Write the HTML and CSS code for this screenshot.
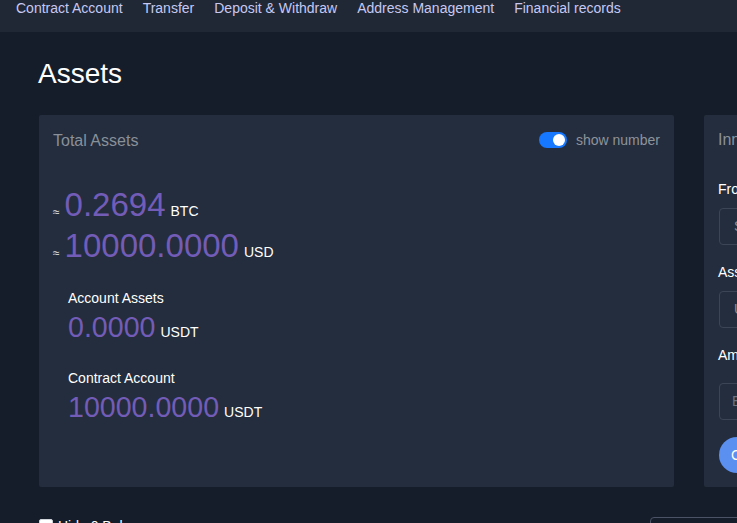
FILE: index.html
```html
<!DOCTYPE html>
<html>
<head>
<meta charset="utf-8">
<link rel="stylesheet" href="styles.css">
</head>
<body>
<nav class="nav">
  <a class="nav-item">Contract Account</a>
  <a class="nav-item">Transfer</a>
  <a class="nav-item">Deposit &amp; Withdraw</a>
  <a class="nav-item">Address Management</a>
  <a class="nav-item">Financial records</a>
</nav>
<main class="main">
  <h1 class="title">Assets</h1>
  <div class="cards">
    <section class="card card-total">
      <div class="card-head">
        <span class="card-title">Total Assets</span>
        <label class="switch-wrap">
          <span class="switch"><span class="knob"></span></span>
          <span class="switch-text">show number</span>
        </label>
      </div>
      <div class="totals">
        <div class="total-line"><span class="approx">≈</span><span class="big">0.2694</span><span class="unit">BTC</span></div>
        <div class="total-line"><span class="approx">≈</span><span class="big">10000.0000</span><span class="unit">USD</span></div>
      </div>
      <div class="sub">
        <div class="sub-label">Account Assets</div>
        <div class="sub-value"><span class="mid">0.0000</span><span class="unit">USDT</span></div>
      </div>
      <div class="sub sub-second">
        <div class="sub-label">Contract Account</div>
        <div class="sub-value"><span class="mid">10000.0000</span><span class="unit">USDT</span></div>
      </div>
    </section>
    <section class="card card-transfer">
      <div class="card-title">Inner Transfer</div>
      <div class="field first">
        <div class="field-label">From</div>
        <div class="input">Spot Account</div>
      </div>
      <div class="field">
        <div class="field-label">Asset</div>
        <div class="input">USDT</div>
      </div>
      <div class="field">
        <div class="field-label">Amount</div>
        <div class="input input-amount placeholder">Enter amount</div>
      </div>
      <button class="btn">Confirm</button>
    </section>
  </div>
  <div class="bottom-row">
    <label class="check"><span class="box"></span>Hide 0 Balance</label>
    <div class="search"></div>
  </div>
</main>
</body>
</html>
```
FILE: styles.css
```css
html, body {
  margin: 0;
  padding: 0;
}
body {
  background: #161d2a;
  font-family: "Liberation Sans", Arial, sans-serif;
  color: #ffffff;
  width: 737px;
  height: 523px;
  overflow: hidden;
}
.nav {
  height: 32px;
  background: #202836;
  display: flex;
  gap: 20px;
  padding: 0 16px;
  font-size: 14px;
  line-height: 16px;
  white-space: nowrap;
}
.nav-item {
  color: #c6c8f2;
  text-decoration: none;
}
.main {
  padding: 26px 0 0 39px;
  width: 1100px;
}
.title {
  margin: 0;
  font-size: 28px;
  line-height: 32px;
  font-weight: normal;
  color: #ffffff;
  margin-left: -1px;
}
.cards {
  display: flex;
  gap: 30px;
  margin-top: 25px;
}
.card {
  background: #232d3d;
  height: 372px;
  box-sizing: border-box;
  padding: 16px 14px;
  border-radius: 2px;
  flex-shrink: 0;
}
.card-total {
  width: 635px;
}
.card-transfer {
  width: 320px;
}
.card-head {
  display: flex;
  justify-content: space-between;
  align-items: center;
  height: 18px;
}
.card-title {
  font-size: 16px;
  line-height: 18px;
  color: #8a9099;
  white-space: nowrap;
}
.card-head .card-title {
  margin-top: 2px;
}
.switch-wrap {
  display: flex;
  align-items: center;
  gap: 9px;
}
.switch {
  width: 28px;
  height: 16px;
  border-radius: 8px;
  background: #1677ff;
  display: flex;
  align-items: center;
  justify-content: flex-end;
  padding-right: 2px;
  box-sizing: border-box;
}
.knob {
  width: 12px;
  height: 12px;
  border-radius: 50%;
  background: #ffffff;
}
.switch-text {
  font-size: 14px;
  line-height: 16px;
  color: #8e939b;
}
.totals {
  margin-top: 35px;
}
.total-line {
  display: flex;
  align-items: baseline;
  line-height: 41px;
  height: 41px;
}
.approx {
  font-size: 12px;
  color: #e6e6e6;
  margin-right: 5px;
}
.big {
  font-size: 33px;
  color: #735cb8;
}
.mid {
  font-size: 28.6px;
  line-height: 32px;
  color: #735cb8;
}
.unit {
  font-size: 14px;
  color: #ffffff;
  margin-left: 5px;
}
.sub {
  margin-top: 24px;
  padding-left: 15px;
}
.sub-second {
  margin-top: 27px;
}
.sub-label {
  font-size: 14px;
  line-height: 16px;
  color: #ffffff;
  margin-bottom: 5px;
}
.sub-value {
  display: flex;
  align-items: baseline;
  height: 32px;
}
.field-label {
  font-size: 14px;
  line-height: 16px;
  color: #ffffff;
  margin-bottom: 11px;
  white-space: nowrap;
}
.field {
  margin-top: 19px;
}
.field.first {
  margin-top: 32px;
}
.input {
  height: 37px;
  box-sizing: border-box;
  border: 1px solid #3b4556;
  border-radius: 4px;
  margin-left: 1px;
  padding: 0 14px;
  font-size: 14px;
  line-height: 35px;
  color: #8a9099;
  white-space: nowrap;
}
.input-amount {
  margin-top: 20px;
}
.placeholder {
  color: #6d7480;
  padding-left: 12px;
}
.btn {
  margin-top: 17px;
  margin-left: 1px;
  height: 36px;
  width: 200px;
  border: none;
  border-radius: 18px;
  background: #5b8ff0;
  color: #ffffff;
  font-family: "Liberation Sans", Arial, sans-serif;
  font-size: 14px;
  text-align: left;
  padding-left: 12px;
}
.bottom-row {
  display: flex;
  align-items: flex-start;
  margin-top: 29px;
  width: 791px;
}
.check {
  display: flex;
  align-items: center;
  gap: 5px;
  font-size: 14px;
  line-height: 16px;
  color: #ffffff;
  margin-top: 2px;
}
.box {
  width: 12px;
  height: 12px;
  border: 1px solid #cfd3da;
  background: #ffffff;
  border-radius: 2px;
}
.search {
  margin-left: auto;
  width: 180px;
  height: 32px;
  box-sizing: border-box;
  border: 1px solid #4a5466;
  border-radius: 4px;
  margin-top: 1px;
}
```
